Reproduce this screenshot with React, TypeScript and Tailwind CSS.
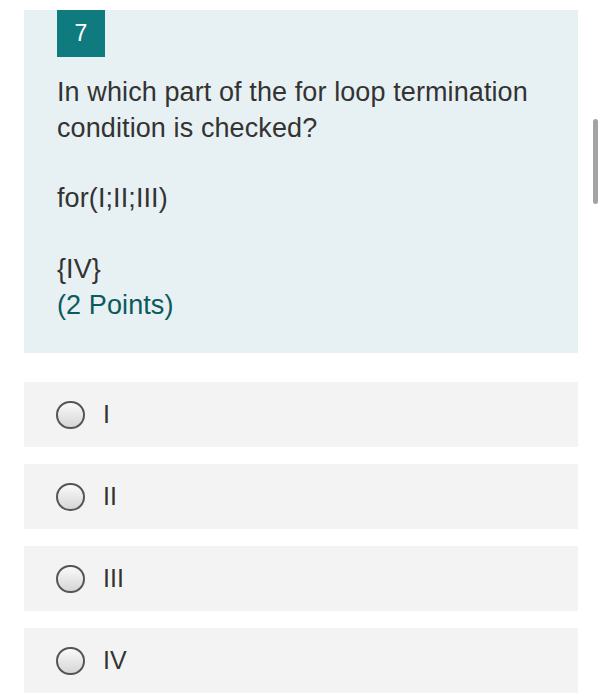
import React from "react";

const options = ["I", "II", "III", "IV"];

function Radio() {
  return (
    <span className="block w-[29px] h-[28px] rounded-full border-[2px] border-[#555] bg-gradient-to-b from-[#fafafa] to-[#d6d6d6] shrink-0" />
  );
}

export default function App() {
  return (
    <div
      className="relative w-[604px] h-[700px] bg-white overflow-hidden"
      style={{ fontFamily: '"Liberation Sans", Arial, sans-serif' }}
    >
      <div className="pl-[24px] pr-[26px] pt-[10px]">
        <div className="bg-[#e7f0f2] px-[33px] pb-[30px]">
          <div className="w-[48px] h-[47px] bg-[#0f7b7e] text-white text-[23px] flex items-center justify-center">
            7
          </div>
          <div className="mt-[17px] text-[27px] leading-[36px] text-[#333] tracking-[0.1px]">
            <p>In which part of the for loop termination condition is checked?</p>
            <p className="mt-[34px]">for(I;II;III)</p>
            <p className="mt-[35px]">{"{IV}"}</p>
            <p className="text-[#0c5a5c]">(2 Points)</p>
          </div>
        </div>
        <div className="mt-[29px] flex flex-col gap-[17px]">
          {options.map((o) => (
            <div
              key={o}
              className="h-[65px] bg-[#f3f3f3] flex items-center pl-[32px] gap-[18px] text-[25px] text-[#333]"
            >
              <Radio />
              <span>{o}</span>
            </div>
          ))}
        </div>
      </div>
      <div className="absolute left-[593px] top-[119px] w-[5px] h-[85px] rounded-full bg-[#a3a3a3]" />
    </div>
  );
}
